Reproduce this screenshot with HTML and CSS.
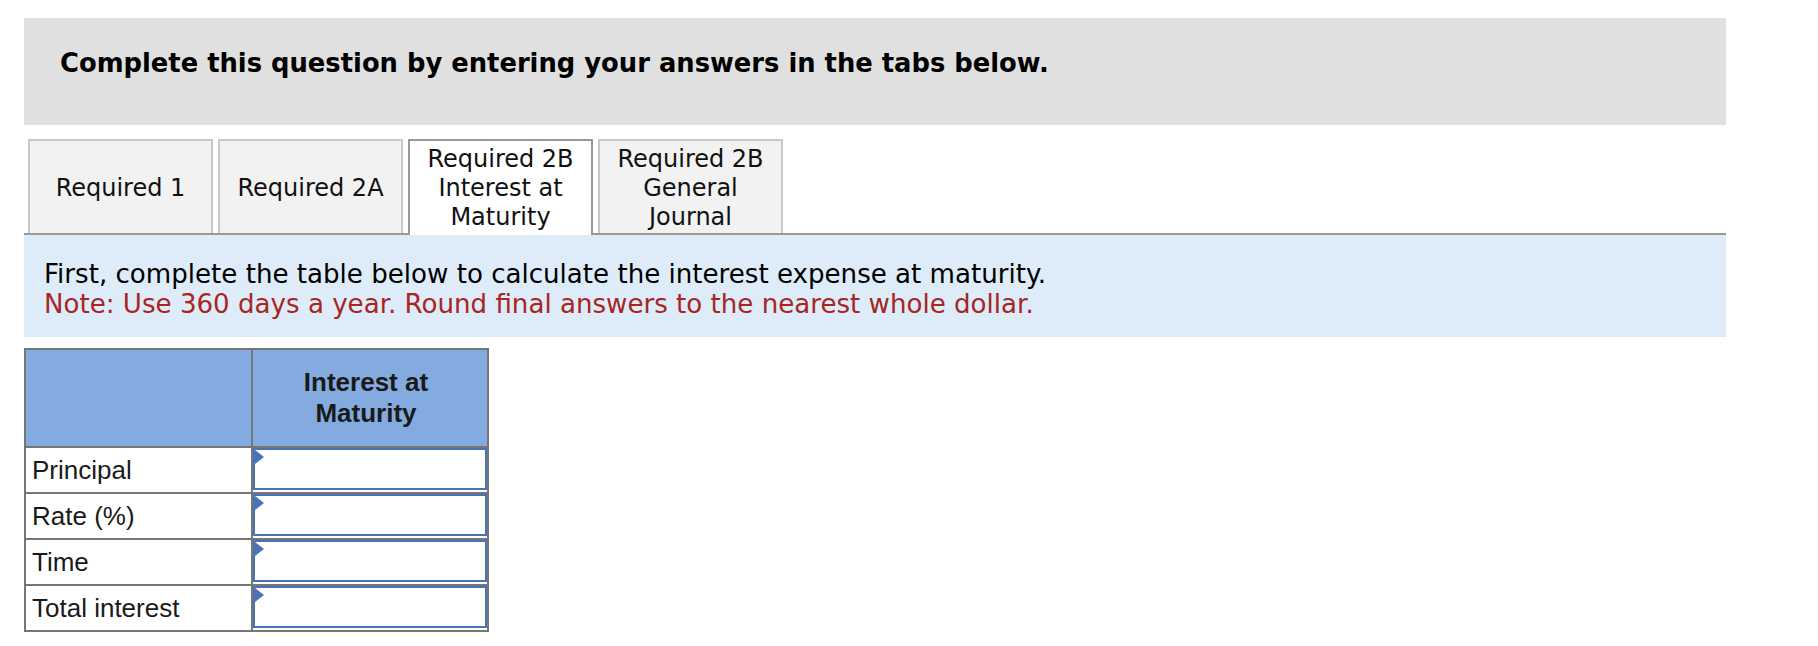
FILE: index.html
```
<!DOCTYPE html>
<html lang="en">
<head>
<meta charset="utf-8">
<title>Interest at Maturity</title>
<link rel="stylesheet" href="styles.css">
</head>
<body>
<div class="page">
  <div class="banner">
    <h1 class="banner-title">Complete this question by entering your answers in the tabs below.</h1>
  </div>

  <div class="tabs">
    <div class="tab">Required 1</div>
    <div class="tab">Required 2A</div>
    <div class="tab tab-active">Required 2B<br>Interest at<br>Maturity</div>
    <div class="tab">Required 2B<br>General<br>Journal</div>
  </div>

  <div class="info">
    <p class="info-line">First, complete the table below to calculate the interest expense at maturity.</p>
    <p class="info-line info-note">Note: Use 360 days a year. Round final answers to the nearest whole dollar.</p>
  </div>

  <table class="calc">
    <thead>
      <tr>
        <th class="head-blank"></th>
        <th class="head-col">Interest at<br>Maturity</th>
      </tr>
    </thead>
    <tbody>
      <tr>
        <td class="label">Principal</td>
        <td class="entry"><div class="input"><span class="marker"></span></div></td>
      </tr>
      <tr>
        <td class="label">Rate (%)</td>
        <td class="entry"><div class="input"><span class="marker"></span></div></td>
      </tr>
      <tr>
        <td class="label">Time</td>
        <td class="entry"><div class="input"><span class="marker"></span></div></td>
      </tr>
      <tr>
        <td class="label">Total interest</td>
        <td class="entry"><div class="input"><span class="marker"></span></div></td>
      </tr>
    </tbody>
  </table>
</div>
</body>
</html>
```

FILE: styles.css
```
* {
  box-sizing: border-box;
}

html, body {
  margin: 0;
  padding: 0;
  background: #ffffff;
}

body {
  font-family: "DejaVu Sans", Verdana, sans-serif;
  color: #000000;
}

.page {
  padding: 18px 0 0 24px;
  width: 1726px;
}

.banner {
  background: #e0e0e0;
  height: 107px;
  padding: 30px 0 0 36px;
}

.banner-title {
  margin: 0;
  font-size: 25.8px;
  line-height: 30px;
  font-weight: bold;
  color: #000000;
}

.tabs {
  display: flex;
  gap: 5px;
  margin-top: 14px;
  padding-left: 4px;
  border-bottom: 2px solid #999999;
  height: 96px;
}

.tab {
  width: 185px;
  height: 94px;
  background: #f2f2f2;
  border: 2px solid #c8c8c8;
  border-bottom: none;
  display: flex;
  align-items: center;
  justify-content: center;
  text-align: center;
  padding-top: 3px;
  font-size: 24px;
  line-height: 29px;
  color: #111111;
}

.tab-active {
  background: #ffffff;
  border-color: #999999;
  height: 96px;
  padding-bottom: 2px;
}

.info {
  background: #deebf8;
  height: 102px;
  padding: 24px 0 0 20px;
}

.info-line {
  margin: 0;
  font-size: 26.1px;
  line-height: 30px;
  color: #000000;
}

.info-note {
  color: #a8261f;
}

.calc {
  margin-top: 11px;
  border-collapse: collapse;
  font-family: "Liberation Sans", Arial, sans-serif;
}

.calc th,
.calc td {
  border: 2px solid #767676;
  padding: 0;
}

.calc thead th {
  background: #83abdf;
  height: 98px;
  font-size: 26px;
  line-height: 31px;
  font-weight: bold;
  color: #1a1a1a;
  text-align: center;
  vertical-align: middle;
}

.head-blank {
  width: 227px;
}

.head-col {
  width: 236px;
  padding-right: 8px !important;
}

.calc td {
  height: 46px;
}

.label {
  font-size: 26px;
  color: #1a1a1a;
  padding-left: 6px !important;
  vertical-align: middle;
}

.entry {
  vertical-align: top;
}

.input {
  position: relative;
  height: 42px;
  margin: 0;
  border: 2px solid #4a72b8;
  background: #ffffff;
}

.marker {
  position: absolute;
  left: 0;
  top: 0;
  width: 0;
  height: 0;
  border-top: 7px solid transparent;
  border-bottom: 7px solid transparent;
  border-left: 9px solid #4a72b8;
}
```
